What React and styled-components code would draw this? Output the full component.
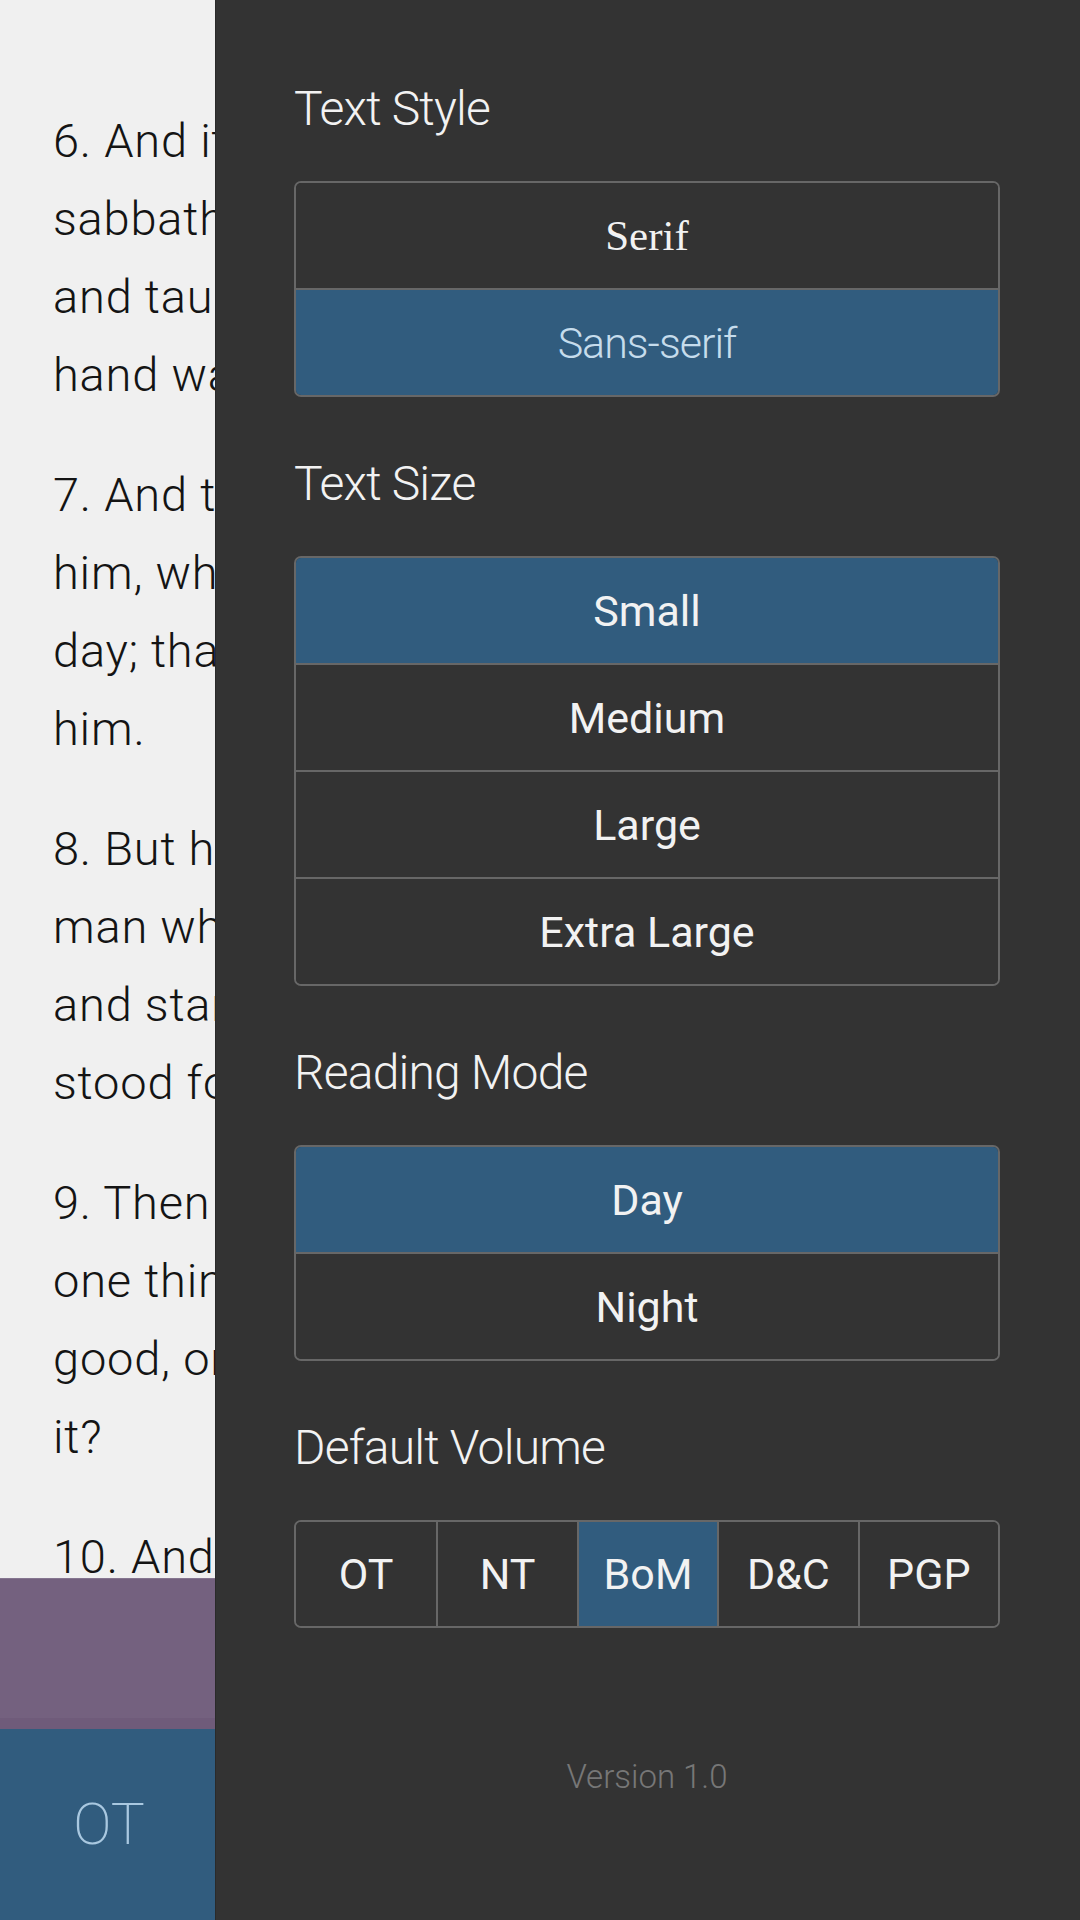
import React from 'react';
import styled, { createGlobalStyle } from 'styled-components';

const Global = createGlobalStyle`
  html, body { margin: 0; padding: 0; }
  body {
    width: 1080px;
    height: 1920px;
    overflow: hidden;
    background: #333333;
    font-family: Roboto, "Liberation Sans", sans-serif;
  }
  #root { width: 1080px; height: 1920px; }
`;

const Screen = styled.div`
  display: flex;
  width: 1080px;
  height: 1920px;
  overflow: hidden;
`;

const ReaderPane = styled.div`
  width: 216px;
  flex: none;
  display: flex;
  flex-direction: column;
`;

const Reading = styled.div`
  flex: 1;
  min-height: 0;
  background: #f0f0f0;
  overflow: hidden;
  padding: 102px 0 0 53px;
`;

const Verse = styled.p`
  margin: 0 0 42px;
  font-size: 47px;
  font-weight: 300;
  line-height: 78px;
  letter-spacing: 0.8px;
  color: #141414;
  white-space: nowrap;
`;

const Line = styled.span`
  display: block;
`;

const ChapterBand = styled.div`
  flex: none;
  height: 151px;
  box-sizing: border-box;
  background: #74617f;
  border-top: 1px solid #857590;
  border-bottom: 11px solid #6f5b7a;
`;

const TabBar = styled.div`
  flex: none;
  height: 191px;
  background: #315c7e;
  display: flex;
  align-items: center;
  justify-content: center;
  font-size: 57px;
  font-weight: 200;
  color: #a9c8e0;
  padding-left: 2px;
`;

const Settings = styled.div`
  flex: 1;
  background: #333333;
  padding: 79px 80px 0 78px;
  display: flex;
  flex-direction: column;
  box-shadow: -1px 0 0 #2a2a2a;
`;

const Section = styled.section`
  margin-bottom: 57px;
`;

const Heading = styled.h2`
  margin: 0 0 42px;
  font-size: 48px;
  font-weight: 300;
  line-height: 60px;
  color: #f2f2f2;
  letter-spacing: -0.8px;
`;

const Group = styled.div`
  border: 2px solid #676767;
  border-radius: 7px;
  overflow: hidden;
`;

const Option = styled.div`
  height: 105px;
  display: flex;
  align-items: center;
  justify-content: center;
  background: ${p => (p.$active ? '#315c7e' : '#333333')};
  color: ${p => (p.$light ? '#c6dcec' : '#f2f2f2')};
  font-family: ${p => (p.$serif ? '"Liberation Serif", "Times New Roman", serif' : 'Roboto, "Liberation Sans", sans-serif')};
  font-size: 43px;
  font-weight: ${p => (p.$light ? 300 : 400)};
  letter-spacing: ${p => (p.$light ? '-1px' : '0')};
  & + & {
    border-top: 2px solid #676767;
  }
`;

const VolumeGroup = styled(Group)`
  display: grid;
  grid-template-columns: repeat(5, 1fr);
`;

const VolumeOption = styled.div`
  height: 104px;
  display: flex;
  align-items: center;
  justify-content: center;
  background: ${p => (p.$active ? '#315c7e' : '#333333')};
  color: #f2f2f2;
  font-size: 43px;
  font-weight: 400;
  & + & {
    border-left: 2px solid #676767;
  }
`;

const Version = styled.div`
  margin-top: 72px;
  text-align: center;
  font-size: 33px;
  font-weight: 300;
  line-height: 40px;
  color: #777777;
`;

const verses = [
  ['6. And it came to pass also on another', 'sabbath, that he entered into the synagogue', 'and taught: and there was a man whose right', 'hand was withered.'],
  ['7. And the scribes and Pharisees watched', 'him, whether he would heal on the sabbath', 'day; that they might find an accusation against', 'him.'],
  ['8. But he knew their thoughts, and said to the', 'man which had the withered hand, Rise up,', 'and stand forth in the midst. And he arose and', 'stood forth.'],
  ['9. Then said Jesus unto them, I will ask you', 'one thing; Is it lawful on the sabbath days to do', 'good, or to do evil? to save life, or to destroy', 'it?'],
  ['10. And looking round about upon them all,', 'he said unto the man, Stretch forth thy hand.'],
];

const sizes = ['Small', 'Medium', 'Large', 'Extra Large'];
const modes = ['Day', 'Night'];
const volumes = ['OT', 'NT', 'BoM', 'D&C', 'PGP'];

export default function App() {
  return (
    <>
      <Global />
      <Screen>
        <ReaderPane>
          <Reading>
            {verses.map((v, i) => (
              <Verse key={i}>
                {v.map((l, j) => (
                  <Line key={j}>{l}</Line>
                ))}
              </Verse>
            ))}
          </Reading>
          <ChapterBand />
          <TabBar>OT</TabBar>
        </ReaderPane>
        <Settings>
          <Section>
            <Heading>Text Style</Heading>
            <Group>
              <Option $serif>Serif</Option>
              <Option $active $light>Sans-serif</Option>
            </Group>
          </Section>
          <Section>
            <Heading>Text Size</Heading>
            <Group>
              {sizes.map((s, i) => (
                <Option key={s} $active={i === 0}>{s}</Option>
              ))}
            </Group>
          </Section>
          <Section>
            <Heading>Reading Mode</Heading>
            <Group>
              {modes.map((m, i) => (
                <Option key={m} $active={i === 0}>{m}</Option>
              ))}
            </Group>
          </Section>
          <Section>
            <Heading>Default Volume</Heading>
            <VolumeGroup>
              {volumes.map(v => (
                <VolumeOption key={v} $active={v === 'BoM'}>{v}</VolumeOption>
              ))}
            </VolumeGroup>
          </Section>
          <Version>Version 1.0</Version>
        </Settings>
      </Screen>
    </>
  );
}
